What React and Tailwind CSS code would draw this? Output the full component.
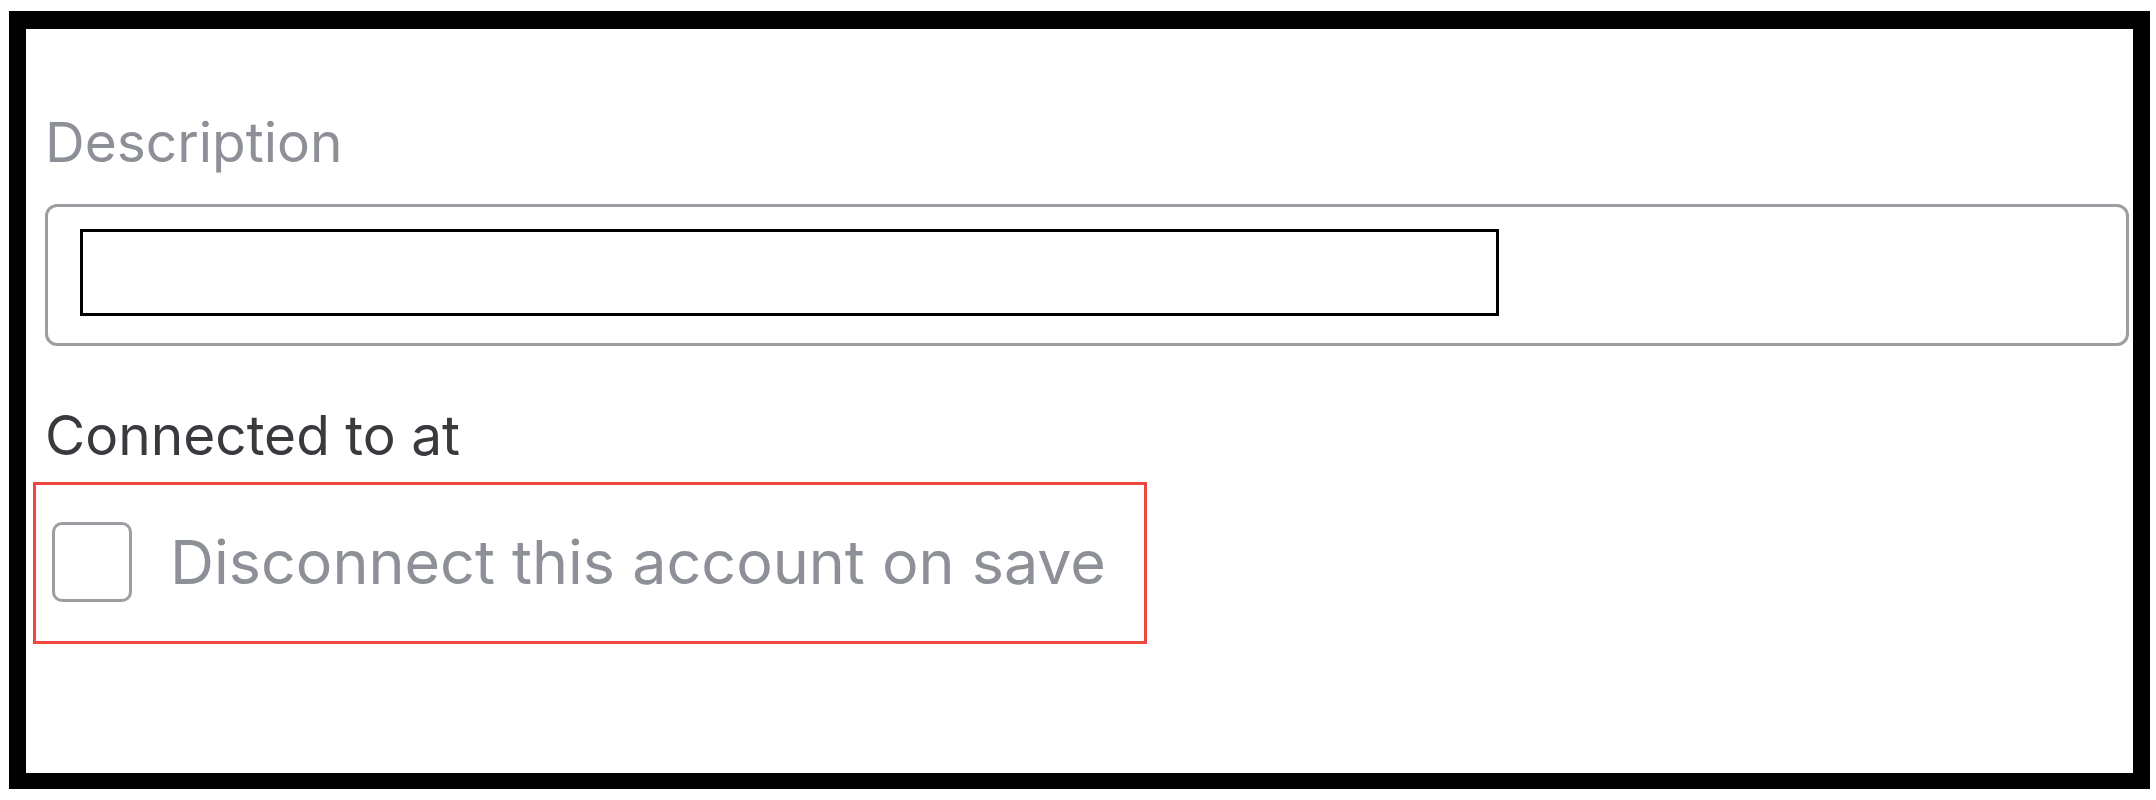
import React, { useState } from 'react';

const App = () => {
    const [disconnect, setDisconnect] = useState(false);

    return (
        <div className="w-[2156px] h-[800px] bg-white pt-[11px] pl-[9px] pr-[6px] pb-[11px]" style={{ fontFamily: 'Inter, "Noto Sans", sans-serif' }}>
            {/* black frame */}
            <div className="h-full border-black border-t-[18px] border-l-[17px] border-r-[17px] border-b-[16px] bg-white">
                <div className="flex flex-col pl-[19px] pr-[4px] pt-[80px]">
                    <label htmlFor="descriptionInput" className="text-[55px] leading-[66px] text-[#8d9096]">Description</label>

                    <div className="mt-[29px] h-[142px] border-[3px] border-[#9c9ea3] rounded-[12px] pl-[32px] pt-[22px]">
                        {/* redacted value */}
                        <div id="descriptionInput" className="w-[1419px] h-[87px] border-[3px] border-black bg-white" />
                    </div>

                    <div className="mt-[56px] text-[55px] leading-[66px] text-[#393a3d]">Connected to at</div>

                    <div className="mt-[14px] -ml-[12px] w-[1114px] border-[3px] border-[#f0473c] pl-[16px] pt-[37px] pb-[39px] flex items-center">
                        <button
                            type="button"
                            onClick={() => setDisconnect(!disconnect)}
                            className="w-[80px] h-[80px] shrink-0 border-[3px] border-[#9c9ea3] rounded-[10px] bg-white"
                        />
                        <span className="ml-[38px] text-[61px] leading-[75px] text-[#8d9096] whitespace-nowrap">Disconnect this account on save</span>
                    </div>
                </div>
            </div>
        </div>
    );
};

export default App;
